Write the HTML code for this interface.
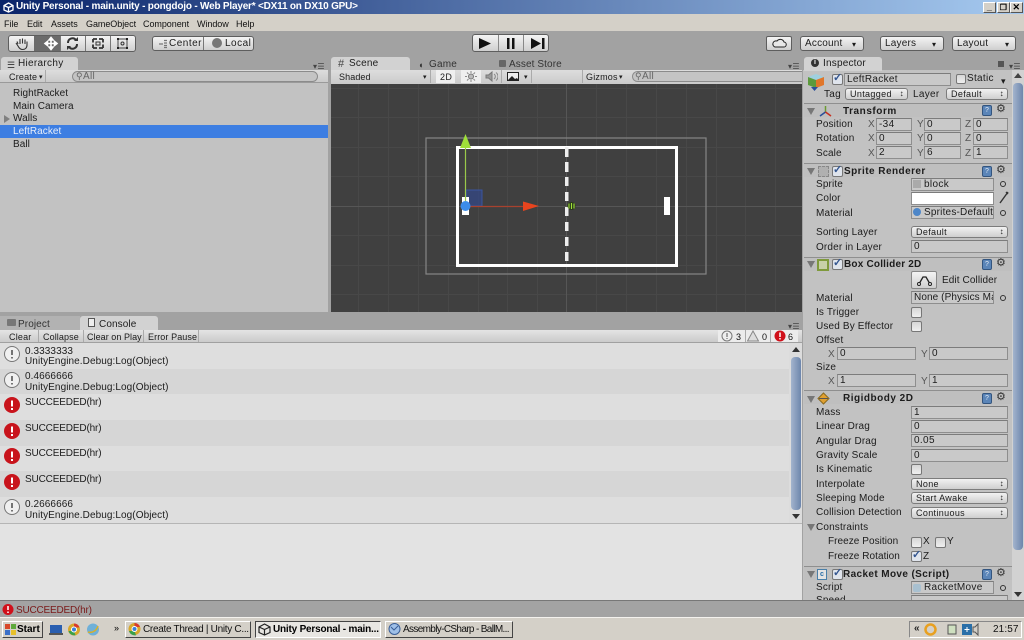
<!DOCTYPE html>
<html><head><meta charset="utf-8"><title>Unity Personal</title>
<style>
html,body{margin:0;padding:0;background:#a2a2a2}
#r{position:relative;width:1024px;height:640px;overflow:hidden;font:10px/12px "Liberation Sans",sans-serif;color:#1c1c1c;letter-spacing:.35px;filter:blur(.3px)}
#r div,#r svg{position:absolute}
.t{white-space:nowrap;transform:translateY(1px)}
.l{letter-spacing:.15px}
.b{font-weight:bold}
.m{letter-spacing:-.05px;color:#111;font-size:9px;top:17px}
.cl{letter-spacing:.08px}
.su{letter-spacing:-.15px}
.f{background:#c9c9c9;border:1px solid #8e8e8e;border-top-color:#7c7c7c;box-sizing:border-box;height:13px;padding-left:2px;line-height:11px;white-space:nowrap;overflow:hidden}
.d{background:linear-gradient(#f2f2f2,#cfcfcf);border:1px solid #7c7c7c;border-radius:3px;box-sizing:border-box;height:12px;padding-left:4px;line-height:10px;font-size:9px;white-space:nowrap}
.d:after{content:"\2195";position:absolute;right:3px;top:0;font-size:8px;font-weight:bold}
.c{background:linear-gradient(#d6d6d6,#efefef);border:1px solid #777;border-radius:2px;box-sizing:border-box;width:11px;height:11px}
.btn{background:linear-gradient(#f4f4f4,#cfcfcf);border:1px solid #5e5e5e;box-sizing:border-box}
.tab{background:#d2d2d2;border-radius:3px 3px 0 0}
.sep{background:#8f8f8f;height:1px;left:804px;width:208px}
.hd{background:#bfbfbf;left:804px;width:208px;height:13px}
.row{left:0;width:789px;height:26px}
.tri{width:0;height:0;border-left:4px solid transparent;border-right:4px solid transparent;border-top:7px solid #777}
.hp{background:#5b85b8;border-radius:2px;width:10px;height:11px;left:982px;border:1px solid #33557f;box-sizing:border-box;color:#dfe8f3;font-size:7px;line-height:9px;text-align:center;letter-spacing:0}
.g{font-size:11px;left:996px;line-height:11px;color:#333;letter-spacing:0}
</style></head><body><div id="r">

<!-- title bar -->
<div style="left:0;top:0;width:1024px;height:14px;background:linear-gradient(90deg,#0a246a,#a6caf0)"></div>
<svg style="left:3px;top:2px" width="11" height="11" viewBox="0 0 11 11"><path d="M5.5 1 10 3.5v4.500L5.500 10 1 8V3.500zM5.500 5.500V10M5.500 5.500 1 3.500M5.500 5.500 10 3.500" fill="none" stroke="#fff" stroke-width="1.300"/></svg>
<div class="t b" style="left:16px;top:0;color:#fff;font-size:10px;letter-spacing:-.2px">Unity Personal - main.unity - pongdojo - Web Player* &lt;DX11 on DX10 GPU&gt;</div>
<div style="left:983px;top:2px;width:13px;height:11px;background:#d4d0c8;border:1px solid;border-color:#fff #555 #555 #fff;box-sizing:border-box;font:bold 9px/9px 'Liberation Sans';color:#000;text-align:center">_</div>
<div style="left:997px;top:2px;width:13px;height:11px;background:#d4d0c8;border:1px solid;border-color:#fff #555 #555 #fff;box-sizing:border-box;font:bold 8px/9px 'Liberation Sans';color:#000;text-align:center">&#10064;</div>
<div style="left:1010px;top:2px;width:13px;height:11px;background:#d4d0c8;border:1px solid;border-color:#fff #555 #555 #fff;box-sizing:border-box;font:bold 9px/9px 'Liberation Sans';color:#000;text-align:center">&#10005;</div>

<!-- menu -->
<div style="left:0;top:14px;width:1024px;height:17px;background:#d4d0c8"></div>
<div class="t m" style="left:4px">File</div>
<div class="t m" style="left:27px">Edit</div>
<div class="t m" style="left:51px">Assets</div>
<div class="t m" style="left:86px">GameObject</div>
<div class="t m" style="left:143px">Component</div>
<div class="t m" style="left:197px">Window</div>
<div class="t m" style="left:236px">Help</div>

<!-- toolbar -->
<div style="left:0;top:31px;width:1024px;height:609px;background:#a2a2a2"></div>
<div class="btn" style="left:8px;top:35px;width:128px;height:17px;border-radius:3px"></div>
<div style="left:34px;top:36px;width:26px;height:15px;background:#6b6b6b"></div>
<div style="left:60px;top:36px;width:1px;height:15px;background:#777"></div>
<div style="left:85px;top:36px;width:1px;height:15px;background:#777"></div>
<div style="left:110px;top:36px;width:1px;height:15px;background:#777"></div>
<svg style="left:14px;top:36px" width="120" height="15" viewBox="0 0 120 15">
<path d="M4 8 3 5.500M6 8V3M8.500 7.500V2.500M11 8V3.500M13 9V5.500M13 9c0 3-2 4.500-4.500 4.500S5 12 4 10L2 7" fill="none" stroke="#333" stroke-width="1.100"/>
<path d="M31.500 7.500h11M37 2v11M35 4l2-2.500L39 4zM35 11l2 2.500L39 11zM33.500 5.500 31 7.500l2.500 2zM40.500 5.500l2.500 2-2.500 2z" fill="#fff" stroke="#fff" stroke-width="1.600"/>
<path d="M54 7a4.500 4.500 0 0 1 8-3M63 8a4.500 4.500 0 0 1-8 3" fill="none" stroke="#333" stroke-width="2"/><path d="M60 5h4V1zM57 10h-4v4z" fill="#333"/>
<path d="M79 3h4M79 3v3.500M89 3h-4M89 3v3.500M79 12h4M79 12v-3.500M89 12h-4M89 12v-3.500" fill="none" stroke="#333" stroke-width="1.800"/><rect x="82" y="6" width="4" height="3" fill="none" stroke="#333"/>
<rect x="104" y="3" width="9" height="9" fill="none" stroke="#444"/><path d="M103 2h2v2h-2zM112 2h2v2h-2zM103 11h2v2h-2zM112 11h2v2h-2z" fill="#222"/><circle cx="108.500" cy="7.500" r="1.500" fill="none" stroke="#333"/>
</svg>
<div class="btn" style="left:152px;top:36px;width:102px;height:15px;border-radius:3px"></div>
<div style="left:203px;top:37px;width:1px;height:13px;background:#777"></div>
<svg style="left:158px;top:39px" width="60" height="10" viewBox="0 0 60 10"><path d="M1 5h4M6 1.500h3M6 4h3M6 6.500h3M6 8.500h3" stroke="#777" stroke-width="1.200" fill="none"/></svg>
<div class="t" style="left:169px;top:37px;font-size:10px;letter-spacing:.5px">Center</div>
<div style="left:212px;top:38px;width:10px;height:10px;border-radius:50%;background:#777"></div>
<div class="t" style="left:225px;top:37px;font-size:10px;letter-spacing:.5px">Local</div>

<div class="btn" style="left:472px;top:34px;width:77px;height:18px;border-radius:3px"></div>
<div style="left:498px;top:35px;width:1px;height:16px;background:#888"></div>
<div style="left:523px;top:35px;width:1px;height:16px;background:#888"></div>
<svg style="left:472px;top:34px" width="77" height="18" viewBox="0 0 77 18"><path d="M7 4 19 9.500 7 15zM35 4h2.500v11H35zM40 4h2.500v11H40zM59 4l10 5.500L59 15zM70 4h2.500v11H70z" fill="#111"/></svg>

<div class="btn" style="left:766px;top:36px;width:26px;height:15px;border-radius:2px"></div>
<svg style="left:772px;top:38px" width="15" height="10" viewBox="0 0 15 10"><path d="M3 9H11.500a2.500 2.500 0 0 0 .5-5A4 4 0 0 0 5 3 3 3 0 0 0 3 9z" fill="#e8e8e8" stroke="#222"/></svg>
<div class="btn t" style="left:800px;top:36px;width:64px;height:15px;border-radius:3px;padding:0 0 0 4px;letter-spacing:.2px;transform:none;line-height:14px">Account</div>
<div class="t" style="left:852px;top:38px;font-size:8px">&#9662;</div>
<div class="btn t" style="left:880px;top:36px;width:64px;height:15px;border-radius:3px;padding:0 0 0 4px;letter-spacing:.2px;transform:none;line-height:14px">Layers</div>
<div class="t" style="left:932px;top:38px;font-size:8px">&#9662;</div>
<div class="btn t" style="left:952px;top:36px;width:64px;height:15px;border-radius:3px;padding:0 0 0 4px;letter-spacing:.2px;transform:none;line-height:14px">Layout</div>
<div class="t" style="left:1005px;top:38px;font-size:8px">&#9662;</div>

<!-- hierarchy -->
<div class="tab" style="left:1px;top:57px;width:77px;height:14px"></div>
<div class="t" style="left:7px;top:58px;font-size:9px;color:#333">&#9776;</div>
<div class="t" style="left:18px;top:57px;letter-spacing:.3px">Hierarchy</div>
<div class="t" style="left:313px;top:60px;font-size:8px;color:#444">&#9662;&#9776;</div>
<div style="left:0;top:70px;width:328px;height:13px;background:linear-gradient(#ddd,#cacaca);border-bottom:1px solid #9a9a9a;box-sizing:border-box"></div>
<div class="t" style="left:9px;top:70px;font-size:9px;letter-spacing:.2px">Create</div>
<div class="t" style="left:39px;top:71px;font-size:7px">&#9662;</div>
<div style="left:45px;top:70px;width:1px;height:12px;background:#aaa"></div>
<div style="left:72px;top:71px;width:246px;height:11px;border:1px solid #8b8b8b;border-radius:6px;background:#c4c4c4;box-sizing:border-box"></div>
<div class="t" style="left:76px;top:69px;font-size:9px;color:#666">&#9906;<span style="font-size:10px">All</span></div>
<div style="left:0;top:83px;width:328px;height:229px;background:#c2c2c2"></div>
<div style="left:0;top:125px;width:328px;height:13px;background:#3d7ee2"></div>
<div class="t" style="left:13px;top:87px;letter-spacing:.05px">RightRacket</div>
<div class="t" style="left:13px;top:100px;letter-spacing:.05px">Main Camera</div>
<div class="t" style="left:13px;top:112px;letter-spacing:.05px">Walls</div>
<div style="left:4px;top:115px;width:0;height:0;border-top:4px solid transparent;border-bottom:4px solid transparent;border-left:6px solid #808080"></div>
<div class="t" style="left:13px;top:125px;letter-spacing:.05px;color:#e8eefa">LeftRacket</div>
<div class="t" style="left:13px;top:138px;letter-spacing:.05px">Ball</div>

<!-- scene -->
<div class="tab" style="left:331px;top:57px;width:79px;height:14px"></div>
<div class="t" style="left:338px;top:57px;font-size:11px;color:#444;letter-spacing:0">#</div>
<div class="t" style="left:349px;top:57px;letter-spacing:.2px">Scene</div>
<div class="t" style="left:418px;top:58px;font-size:9px;color:#333">&#9686;</div>
<div class="t" style="left:429px;top:58px;letter-spacing:.2px;color:#333">Game</div>
<div style="left:499px;top:60px;width:7px;height:7px;background:#666;border-radius:1px"></div>
<div class="t" style="left:509px;top:58px;letter-spacing:.1px;color:#333">Asset Store</div>
<div class="t" style="left:788px;top:60px;font-size:8px;color:#444">&#9662;&#9776;</div>
<div style="left:331px;top:70px;width:471px;height:14px;background:linear-gradient(#ddd,#cacaca)"></div>
<div class="t" style="left:339px;top:70px;font-size:9px;letter-spacing:.1px">Shaded</div>
<div class="t" style="left:423px;top:71px;font-size:7px">&#9662;</div>
<div style="left:430px;top:70px;width:1px;height:13px;background:#aaa"></div>
<div style="left:436px;top:70px;width:19px;height:13px;background:#efefef"></div>
<div class="t" style="left:440px;top:70px;font-size:9px">2D</div>
<div style="left:461px;top:70px;width:20px;height:13px;background:#efefef"></div>
<svg style="left:465px;top:71px" width="12" height="11" viewBox="0 0 12 11"><circle cx="6" cy="5.500" r="2.500" fill="#bbb" stroke="#777"/><path d="M6 0v2M6 9v2M0 5.500h2M10 5.500h2M2 1.500l1.500 1.500M8.500 8l1.500 1.500M2 9.500 3.500 8M8.500 3 10 1.500" stroke="#888"/></svg>
<svg style="left:485px;top:71px" width="13" height="11" viewBox="0 0 13 11"><path d="M1 4h2.500L7 1v9L3.500 7H1z" fill="#999" stroke="#777"/><path d="M9 3a3 3 0 0 1 0 5M11 1.500a5 5 0 0 1 0 8" fill="none" stroke="#888"/></svg>
<div style="left:501px;top:70px;width:1px;height:13px;background:#aaa"></div>
<svg style="left:507px;top:72px" width="13" height="9" viewBox="0 0 13 9"><rect x=".5" y=".5" width="11" height="8" fill="#eee" stroke="#222"/><path d="M1 8 5 4l3 3 2-1 1.500 2z" fill="#222"/></svg>
<div class="t" style="left:524px;top:71px;font-size:7px">&#9662;</div>
<div style="left:531px;top:70px;width:1px;height:13px;background:#aaa"></div>
<div style="left:582px;top:70px;width:1px;height:13px;background:#aaa"></div>
<div class="t" style="left:586px;top:70px;font-size:9px;letter-spacing:.2px">Gizmos</div>
<div class="t" style="left:619px;top:71px;font-size:7px">&#9662;</div>
<div style="left:632px;top:71px;width:170px;height:11px;border:1px solid #8b8b8b;border-right:0;border-radius:6px 0 0 6px;background:#c4c4c4;box-sizing:border-box"></div>
<div class="t" style="left:635px;top:69px;font-size:9px;color:#666">&#9906;<span style="font-size:10px">All</span></div>
<svg style="left:331px;top:84px" width="471" height="228" viewBox="331 84 471 228">
<rect x="331" y="84" width="471" height="228" fill="#404040"/>
<g stroke="#484848"><path d="M358.500 84v228M388.500 84v228M418.500 84v228M448.500 84v228M478.500 84v228M507.500 84v228M537.500 84v228M596.500 84v228M626.500 84v228M656.500 84v228M686.500 84v228M716.500 84v228M745.500 84v228M775.500 84v228M331 88.500h471M331 117.500h471M331 147.500h471M331 176.500h471M331 235.500h471M331 265.500h471M331 294.500h471"/></g>
<path d="M566.500 84v228M331 206.500h471" stroke="#565656"/>
<rect x="426" y="138" width="280" height="136" fill="none" stroke="#858585" stroke-width="1.200"/>
<rect x="457.500" y="147.500" width="219" height="118" fill="none" stroke="#fff" stroke-width="3"/>
<g fill="#eee"><rect x="565" y="147" width="3.500" height="10"/><rect x="565" y="162" width="3.500" height="10"/><rect x="565" y="177" width="3.500" height="9"/><rect x="565" y="192" width="3.500" height="9"/><rect x="565" y="207" width="3.500" height="9"/><rect x="565" y="222" width="3.500" height="9"/><rect x="565" y="237" width="3.500" height="9"/><rect x="565" y="252" width="3.500" height="9"/></g>
<rect x="664" y="197" width="6" height="18" fill="#fff"/>
<rect x="466" y="190" width="16" height="16" fill="#32478a" fill-opacity=".7" stroke="#3a55a0"/>
<rect x="462" y="197" width="7" height="18" fill="#fff"/>
<path d="M465.500 146v55" stroke="#9ac94a" stroke-width="1.200"/>
<path d="M465.500 134 471 148H460z" fill="#9fe03a"/>
<path d="M470 206.500h55" stroke="#a8422e" stroke-width="1.200"/>
<path d="M523 201.500 539 206 523 211z" fill="#e8441e"/>
<circle cx="465.500" cy="206" r="5" fill="#3c8ce8"/>
<circle cx="571.500" cy="206" r="4" fill="#2a3a1a"/><path d="M569 203.500v5M571.500 203v6M574 203.500v5" stroke="#9fe03a" stroke-width="1.100"/>
</svg>

<!-- console -->
<div style="left:0;top:316px;width:80px;height:14px;background:#b2b2b2"></div>
<div style="left:7px;top:319px;width:9px;height:7px;background:#777;border-radius:1px"></div>
<div class="t" style="left:18px;top:318px;letter-spacing:.1px;color:#333">Project</div>
<div class="tab" style="left:80px;top:316px;width:78px;height:15px"></div>
<div style="left:88px;top:318px;width:7px;height:9px;border:1px solid #555;box-sizing:border-box;background:#eee"></div>
<div class="t" style="left:99px;top:318px;letter-spacing:.1px">Console</div>
<div class="t" style="left:788px;top:320px;font-size:8px;color:#444">&#9662;&#9776;</div>
<div style="left:0;top:330px;width:802px;height:13px;background:linear-gradient(#e4e4e4,#cbcbcb);border-bottom:1px solid #a0a0a0;box-sizing:border-box"></div>
<div style="left:38px;top:330px;width:1px;height:12px;background:#aaa"></div>
<div style="left:83px;top:330px;width:1px;height:12px;background:#aaa"></div>
<div style="left:143px;top:330px;width:1px;height:12px;background:#aaa"></div>
<div style="left:198px;top:330px;width:1px;height:12px;background:#aaa"></div>
<div class="t" style="left:9px;top:330px;font-size:9px;letter-spacing:.2px">Clear</div>
<div class="t" style="left:43px;top:330px;font-size:9px;letter-spacing:.1px">Collapse</div>
<div class="t" style="left:87px;top:330px;font-size:9px;letter-spacing:.05px">Clear on Play</div>
<div class="t" style="left:148px;top:330px;font-size:9px;letter-spacing:.1px">Error Pause</div>
<div style="left:718px;top:330px;width:80px;height:12px;background:#ececec"></div>
<div style="left:745px;top:330px;width:1px;height:12px;background:#aaa"></div>
<div style="left:770px;top:330px;width:1px;height:12px;background:#aaa"></div>
<svg style="left:720px;top:330px" width="72" height="12" viewBox="0 0 72 12"><circle cx="7" cy="6" r="5" fill="#eee" stroke="#777"/><path d="M7 3v4M7 8v1" stroke="#555"/><path d="M33 1l5.500 10h-11z" fill="#ddd" stroke="#888"/><circle cx="60" cy="6" r="5.500" fill="#d0101a"/><path d="M60 2.500v4.500M60 8v1.500" stroke="#fff" stroke-width="1.500"/></svg>
<div class="t" style="left:736px;top:330px;font-size:9px;color:#111">3</div>
<div class="t" style="left:762px;top:330px;font-size:9px;color:#111">0</div>
<div class="t" style="left:788px;top:330px;font-size:9px;color:#111">6</div>

<div style="left:0;top:343px;width:802px;height:257px;background:#e3e3e3"></div>
<div class="row" style="top:343px;background:#dedede"></div>
<div class="row" style="top:369px;background:#d6d6d6"></div>
<div class="row" style="top:394px;background:#dedede"></div>
<div class="row" style="top:420px;background:#d6d6d6"></div>
<div class="row" style="top:446px;background:#dedede"></div>
<div class="row" style="top:471px;background:#d6d6d6"></div>
<div class="row" style="top:497px;background:#dedede;height:27px"></div>
<div style="left:0;top:523px;width:802px;height:1px;background:#b5b5b5"></div>
<svg style="left:0;top:343px" width="24" height="180" viewBox="0 0 24 180">
<g fill="#f0f0f0" stroke="#777"><circle cx="12" cy="11" r="7.500"/><circle cx="12" cy="37" r="7.500"/></g>
<path d="M12 7v5M12 14v1.500M12 33v5M12 40v1.500" stroke="#555" stroke-width="1.600"/>
<g fill="#c8141c"><circle cx="12" cy="62" r="8"/><circle cx="12" cy="88" r="8"/><circle cx="12" cy="113" r="8"/><circle cx="12" cy="139" r="8"/></g>
<path d="M12 57.500v6M12 65v2M12 83.500v6M12 91v2M12 108.500v6M12 116v2M12 134.500v6M12 142v2" stroke="#fff" stroke-width="2"/>
<circle cx="12" cy="164" r="7.500" fill="#f0f0f0" stroke="#777"/><path d="M12 160v5M12 167v1.500" stroke="#555" stroke-width="1.600"/>
</svg>
<div class="t cl" style="left:25px;top:345px">0.3333333</div>
<div class="t cl" style="left:25px;top:355px">UnityEngine.Debug:Log(Object)</div>
<div class="t cl" style="left:25px;top:370px">0.4666666</div>
<div class="t cl" style="left:25px;top:381px">UnityEngine.Debug:Log(Object)</div>
<div class="t su" style="left:25px;top:396px">SUCCEEDED(hr)</div>
<div class="t su" style="left:25px;top:422px">SUCCEEDED(hr)</div>
<div class="t su" style="left:25px;top:447px">SUCCEEDED(hr)</div>
<div class="t su" style="left:25px;top:473px">SUCCEEDED(hr)</div>
<div class="t cl" style="left:25px;top:498px">0.2666666</div>
<div class="t cl" style="left:25px;top:509px">UnityEngine.Debug:Log(Object)</div>
<div style="left:789px;top:343px;width:13px;height:180px;background:#dcdcdc"></div>
<div style="left:791px;top:357px;width:10px;height:153px;background:linear-gradient(90deg,#a3b4cd,#6d86ac);border-radius:4px"></div>
<div style="left:792px;top:347px;width:0;height:0;border-left:4px solid transparent;border-right:4px solid transparent;border-bottom:5px solid #333"></div>
<div style="left:792px;top:514px;width:0;height:0;border-left:4px solid transparent;border-right:4px solid transparent;border-top:5px solid #333"></div>

<!-- inspector -->
<div style="left:803px;top:70px;width:221px;height:530px;background:#c2c2c2"></div>
<div class="tab" style="left:804px;top:57px;width:78px;height:14px"></div>
<div style="left:811px;top:59px;width:8px;height:8px;border-radius:50%;background:#333;color:#fff;font:bold 7px/8px 'Liberation Sans';text-align:center;letter-spacing:0">i</div>
<div class="t" style="left:823px;top:57px;letter-spacing:.2px">Inspector</div>
<div style="left:998px;top:61px;width:6px;height:6px;background:#555"></div>
<div class="t" style="left:1009px;top:60px;font-size:8px;color:#444">&#9662;&#9776;</div>

<!-- scrollbar -->
<div style="left:1012px;top:70px;width:12px;height:530px;background:#d2d2d2"></div>
<div style="left:1013px;top:83px;width:10px;height:467px;background:linear-gradient(90deg,#a3b4cd,#6d86ac);border-radius:4px"></div>
<div style="left:1014px;top:73px;width:0;height:0;border-left:4px solid transparent;border-right:4px solid transparent;border-bottom:5px solid #444"></div>
<div style="left:1014px;top:592px;width:0;height:0;border-left:4px solid transparent;border-right:4px solid transparent;border-top:5px solid #333"></div>

<svg style="left:807px;top:73px" width="18" height="19" viewBox="0 0 18 19"><path d="M1 4 9 1l8 3-8 3z" fill="#9fd0e0"/><path d="M1 4l8 3v8l-8-3z" fill="#5c9a3c"/><path d="M17 4 9 7v8l8-3z" fill="#e0762a"/><path d="M4 14h7l-3.500 4z" fill="#2a4f9a"/></svg>
<div class="c" style="left:832px;top:74px;background:#dfe4ec"></div>
<div class="t b" style="left:833px;top:71px;color:#33558f;font-size:11px;letter-spacing:0">&#10003;</div>
<div class="f" style="left:844px;top:73px;width:107px;letter-spacing:.3px">LeftRacket</div>
<div class="c" style="left:956px;top:74px;width:10px;height:10px"></div>
<div class="t" style="left:967px;top:72px;letter-spacing:.3px">Static</div>
<div class="t" style="left:1001px;top:74px;font-size:9px">&#9662;</div>
<div class="t" style="left:824px;top:88px;letter-spacing:.3px">Tag</div>
<div class="d" style="left:845px;top:88px;width:63px">Untagged</div>
<div class="t" style="left:913px;top:88px;letter-spacing:.3px">Layer</div>
<div class="d" style="left:946px;top:88px;width:62px">Default</div>

<div class="sep" style="top:103px"></div>
<div class="hd" style="top:104px"></div>
<div class="tri" style="left:807px;top:108px"></div>
<svg style="left:819px;top:105px" width="13" height="12" viewBox="0 0 13 12"><path d="M6.500 7V1" stroke="#6a9a30" stroke-width="1.500"/><path d="M6.500 7 1 11" stroke="#2a4f9a" stroke-width="1.500"/><path d="M6.500 7 12 11" stroke="#c83020" stroke-width="1.500"/></svg>
<div class="t b" style="left:843px;top:105px;letter-spacing:.55px">Transform</div>
<div class="hp" style="top:105px">?</div><div class="g" style="top:104px">&#9881;</div>

<div class="t l" style="left:816px;top:118px">Position</div>
<div class="t l" style="left:816px;top:132px">Rotation</div>
<div class="t l" style="left:816px;top:147px">Scale</div>
<div class="t" style="left:868px;top:118px;color:#555">X</div><div class="t" style="left:917px;top:118px;color:#555">Y</div><div class="t" style="left:965px;top:118px;color:#555">Z</div>
<div class="t" style="left:868px;top:132px;color:#555">X</div><div class="t" style="left:917px;top:132px;color:#555">Y</div><div class="t" style="left:965px;top:132px;color:#555">Z</div>
<div class="t" style="left:868px;top:147px;color:#555">X</div><div class="t" style="left:917px;top:147px;color:#555">Y</div><div class="t" style="left:965px;top:147px;color:#555">Z</div>
<div class="f" style="left:876px;top:118px;width:36px">-34</div><div class="f" style="left:924px;top:118px;width:37px">0</div><div class="f" style="left:973px;top:118px;width:35px">0</div>
<div class="f" style="left:876px;top:132px;width:36px">0</div><div class="f" style="left:924px;top:132px;width:37px">0</div><div class="f" style="left:973px;top:132px;width:35px">0</div>
<div class="f" style="left:876px;top:146px;width:36px">2</div><div class="f" style="left:924px;top:146px;width:37px">6</div><div class="f" style="left:973px;top:146px;width:35px">1</div>

<div class="sep" style="top:163px"></div>
<div class="hd" style="top:164px"></div>
<div class="tri" style="left:807px;top:168px"></div>
<div style="left:818px;top:166px;width:11px;height:11px;background:#b0b0b0;border:1px dashed #888;box-sizing:border-box"></div>
<div class="c" style="left:832px;top:166px;background:#dfe4ec"></div>
<div class="t b" style="left:833px;top:163px;color:#33558f;font-size:11px;letter-spacing:0">&#10003;</div>
<div class="t b" style="left:844px;top:165px;letter-spacing:.45px">Sprite Renderer</div>
<div class="hp" style="top:166px">?</div><div class="g" style="top:165px">&#9881;</div>

<div class="t l" style="left:816px;top:178px">Sprite</div>
<div class="t l" style="left:816px;top:192px">Color</div>
<div class="t l" style="left:816px;top:207px">Material</div>
<div class="f" style="left:911px;top:178px;width:83px;padding-left:12px">block</div>
<div style="left:913px;top:180px;width:8px;height:8px;background:#aaa"></div>
<div class="f" style="left:911px;top:192px;width:83px;background:#fff"></div>
<div class="f" style="left:911px;top:206px;width:83px;padding-left:12px;letter-spacing:.2px">Sprites-Default</div>
<div style="left:913px;top:208px;width:8px;height:8px;border-radius:50%;background:#4d86c8"></div>
<svg style="left:999px;top:178px" width="10" height="46" viewBox="0 0 10 46"><circle cx="4" cy="6" r="2.500" fill="none" stroke="#333"/><circle cx="4" cy="35" r="2.500" fill="none" stroke="#333"/><path d="M9 14 1 25M7 14l2 2" stroke="#333" stroke-width="1.400"/></svg>

<div class="t l" style="left:816px;top:226px">Sorting Layer</div>
<div class="t l" style="left:816px;top:241px">Order in Layer</div>
<div class="d" style="left:911px;top:226px;width:97px">Default</div>
<div class="f" style="left:911px;top:240px;width:97px">0</div>

<div class="sep" style="top:257px"></div>
<div class="hd" style="top:258px"></div>
<div class="tri" style="left:807px;top:261px"></div>
<div style="left:817px;top:259px;width:12px;height:12px;background:#c8d0a8;border:2px solid #7f9a3c;box-sizing:border-box"></div>
<div class="c" style="left:832px;top:259px;background:#dfe4ec"></div>
<div class="t b" style="left:833px;top:256px;color:#33558f;font-size:11px;letter-spacing:0">&#10003;</div>
<div class="t b" style="left:844px;top:258px;letter-spacing:.2px">Box Collider 2D</div>
<div class="hp" style="top:259px">?</div><div class="g" style="top:258px">&#9881;</div>

<div class="btn" style="left:911px;top:271px;width:26px;height:18px;border-radius:2px;border-color:#888"></div>
<svg style="left:917px;top:274px" width="15" height="13" viewBox="0 0 15 13"><path d="M2 10 6 3h3l4 7" fill="none" stroke="#222" stroke-width="1.300"/><circle cx="2" cy="10" r="1.500" fill="#eee" stroke="#222"/><circle cx="13" cy="10" r="1.500" fill="#eee" stroke="#222"/></svg>
<div class="t" style="left:942px;top:274px;letter-spacing:.1px">Edit Collider</div>

<div class="t l" style="left:816px;top:292px">Material</div>
<div class="f" style="left:911px;top:291px;width:83px;letter-spacing:.1px">None (Physics Ma</div>
<svg style="left:999px;top:293px" width="10" height="10" viewBox="0 0 10 10"><circle cx="4" cy="5" r="2.500" fill="none" stroke="#333"/></svg>
<div class="t l" style="left:816px;top:306px">Is Trigger</div>
<div class="c" style="left:911px;top:307px"></div>
<div class="t l" style="left:816px;top:320px">Used By Effector</div>
<div class="c" style="left:911px;top:321px"></div>
<div class="t l" style="left:816px;top:334px">Offset</div>
<div class="t" style="left:828px;top:348px;color:#555">X</div><div class="f" style="left:837px;top:347px;width:79px">0</div>
<div class="t" style="left:921px;top:348px;color:#555">Y</div><div class="f" style="left:929px;top:347px;width:79px">0</div>
<div class="t l" style="left:816px;top:361px">Size</div>
<div class="t" style="left:828px;top:375px;color:#555">X</div><div class="f" style="left:837px;top:374px;width:79px">1</div>
<div class="t" style="left:921px;top:375px;color:#555">Y</div><div class="f" style="left:929px;top:374px;width:79px">1</div>

<div class="sep" style="top:390px"></div>
<div class="hd" style="top:391px"></div>
<div class="tri" style="left:807px;top:396px"></div>
<svg style="left:817px;top:392px" width="13" height="13" viewBox="0 0 13 13"><path d="M6.500 1 12 6.500 6.500 12 1 6.500z" fill="#e0a030" stroke="#8a6a20"/><path d="M2 6.500h9" stroke="#555"/></svg>
<div class="t b" style="left:843px;top:392px;letter-spacing:.5px">Rigidbody 2D</div>
<div class="hp" style="top:393px">?</div><div class="g" style="top:392px">&#9881;</div>

<div class="t l" style="left:816px;top:406px">Mass</div><div class="f" style="left:911px;top:406px;width:97px">1</div>
<div class="t l" style="left:816px;top:420px">Linear Drag</div><div class="f" style="left:911px;top:420px;width:97px">0</div>
<div class="t l" style="left:816px;top:435px">Angular Drag</div><div class="f" style="left:911px;top:434px;width:97px">0.05</div>
<div class="t l" style="left:816px;top:449px">Gravity Scale</div><div class="f" style="left:911px;top:449px;width:97px">0</div>
<div class="t l" style="left:816px;top:463px">Is Kinematic</div><div class="c" style="left:911px;top:464px"></div>
<div class="t l" style="left:816px;top:478px">Interpolate</div><div class="d" style="left:911px;top:478px;width:97px">None</div>
<div class="t l" style="left:816px;top:492px">Sleeping Mode</div><div class="d" style="left:911px;top:492px;width:97px">Start Awake</div>
<div class="t l" style="left:816px;top:506px">Collision Detection</div><div class="d" style="left:911px;top:507px;width:97px">Continuous</div>
<div class="tri" style="left:807px;top:524px"></div>
<div class="t l" style="left:816px;top:521px">Constraints</div>
<div class="t" style="left:828px;top:535px;letter-spacing:.05px">Freeze Position</div>
<div class="c" style="left:911px;top:537px"></div><div class="t" style="left:923px;top:535px">X</div>
<div class="c" style="left:935px;top:537px"></div><div class="t" style="left:947px;top:535px">Y</div>
<div class="t" style="left:828px;top:550px;letter-spacing:.05px">Freeze Rotation</div>
<div class="c" style="left:911px;top:551px;background:#dfe4ec"></div>
<div class="t b" style="left:912px;top:548px;color:#33558f;font-size:11px;letter-spacing:0">&#10003;</div>
<div class="t" style="left:923px;top:550px">Z</div>

<div class="sep" style="top:566px"></div>
<div class="hd" style="top:567px"></div>
<div class="tri" style="left:807px;top:571px"></div>
<div style="left:817px;top:569px;width:10px;height:11px;background:#e4e4e4;border:1px solid #4a7fa8;box-sizing:border-box;color:#2a6fa8;font:bold 7px/9px 'Liberation Sans';text-align:center;letter-spacing:0">c</div>
<div class="c" style="left:832px;top:569px;background:#dfe4ec"></div>
<div class="t b" style="left:833px;top:566px;color:#33558f;font-size:11px;letter-spacing:0">&#10003;</div>
<div class="t b" style="left:843px;top:568px;letter-spacing:.38px">Racket Move (Script)</div>
<div class="hp" style="top:569px">?</div><div class="g" style="top:568px">&#9881;</div>
<div class="t l" style="left:816px;top:581px">Script</div>
<div class="f" style="left:911px;top:581px;width:83px;padding-left:12px;letter-spacing:.3px">RacketMove</div>
<div style="left:913px;top:584px;width:8px;height:8px;background:#a8c0d0;border-radius:2px"></div>
<svg style="left:999px;top:583px" width="10" height="10" viewBox="0 0 10 10"><circle cx="4" cy="5" r="2.500" fill="none" stroke="#333"/></svg>
<div class="f" style="left:911px;top:595px;width:97px;height:5px;border-bottom:0"></div>
<div class="t l" style="left:816px;top:595px;height:5px;overflow:hidden;transform:none">Speed</div>

<!-- status bar -->
<div style="left:0;top:600px;width:1024px;height:17px;background:#a3a3a3;border-top:1px solid #777;box-sizing:border-box"></div>
<svg style="left:2px;top:603px" width="13" height="13" viewBox="0 0 13 13"><circle cx="6" cy="6.500" r="5.500" fill="#d0101a"/><path d="M6 3v4M6 8.500v1.500" stroke="#fff" stroke-width="1.500"/></svg>
<div class="t" style="left:16px;top:604px;color:#7a1a1a;letter-spacing:-.2px">SUCCEEDED(hr)</div>

<!-- taskbar -->
<div style="left:0;top:617px;width:1024px;height:23px;background:#d4d0c8;border-top:1px solid #f4f2ee;box-sizing:border-box"></div>
<div style="left:2px;top:621px;width:41px;height:17px;background:#d4d0c8;border:1px solid;border-color:#fff #444 #444 #fff;box-sizing:border-box"></div>
<svg style="left:4px;top:622px" width="13" height="14" viewBox="0 0 13 14"><path d="M1 2h5v5H1z" fill="#d8482a"/><path d="M7 2h5v5H7z" fill="#5ea83a"/><path d="M1 8h5v5H1z" fill="#3a6fc8"/><path d="M7 8h5v5H7z" fill="#e8c02a"/></svg>
<div class="t b" style="left:17px;top:623px;color:#000;letter-spacing:0;font-size:10px">Start</div>
<svg style="left:49px;top:622px" width="60" height="15" viewBox="0 0 60 15"><rect x="1" y="3" width="12" height="8" fill="#2a5fb0"/><rect x="0" y="11" width="14" height="2" fill="#555"/><circle cx="25" cy="7.500" r="6" fill="#d8a82a"/><path d="M25 1.500a6 6 0 0 1 5.500 4H25z" fill="#d83a2a"/><path d="M19.500 9a6 6 0 0 0 7 4.300L25 9z" fill="#3aa04a"/><circle cx="25" cy="7.500" r="2.500" fill="#3a7fd8" stroke="#fff"/><circle cx="44" cy="7.500" r="6" fill="#6fb0d8"/><path d="M39 10c3 1 8 0 10-6" fill="none" stroke="#d8b02a" stroke-width="1.500"/></svg>
<div class="t" style="left:114px;top:621px;color:#000;font-size:9px;letter-spacing:0">&raquo;</div>

<div style="left:125px;top:621px;width:126px;height:17px;background:#d4d0c8;border:1px solid;border-color:#fff #444 #444 #fff;box-sizing:border-box"></div>
<svg style="left:128px;top:622px" width="13" height="14" viewBox="0 0 13 14"><circle cx="6.500" cy="7" r="6" fill="#d8a82a"/><path d="M6.500 1a6 6 0 0 1 5.500 4H6.500z" fill="#d83a2a"/><path d="M1 9a6 6 0 0 0 7 4.300L6.500 9z" fill="#3aa04a"/><circle cx="6.500" cy="7" r="2.500" fill="#3a7fd8" stroke="#fff"/></svg>
<div class="t" style="left:143px;top:623px;color:#111;letter-spacing:-.3px">Create Thread | Unity C...</div>
<div style="left:255px;top:621px;width:126px;height:17px;background:#e8e6e2;border:1px solid;border-color:#444 #fff #fff #444;box-sizing:border-box"></div>
<svg style="left:258px;top:623px" width="13" height="13" viewBox="0 0 13 13"><path d="M6.500 1 12 4v5.500L6.500 12 1 9.500V4zM6.500 6.500 12 4M6.500 6.500 1 4M6.500 6.500V12" fill="none" stroke="#222" stroke-width="1.200"/></svg>
<div class="t b" style="left:273px;top:623px;color:#000;letter-spacing:-.2px">Unity Personal - main...</div>
<div style="left:385px;top:621px;width:128px;height:17px;background:#d4d0c8;border:1px solid;border-color:#fff #444 #444 #fff;box-sizing:border-box"></div>
<svg style="left:388px;top:622px" width="13" height="14" viewBox="0 0 13 14"><circle cx="6.500" cy="7" r="5.500" fill="#9fc0e8" stroke="#3a5f98"/><path d="M3 5l3 3 4-4" stroke="#3a5f98" fill="none"/></svg>
<div class="t" style="left:403px;top:623px;color:#111;letter-spacing:-.65px">Assembly-CSharp - BallM...</div>

<div style="left:909px;top:621px;width:113px;height:17px;border:1px solid;border-color:#888 #fff #fff #888;box-sizing:border-box"></div>
<div class="t b" style="left:914px;top:622px;color:#222;letter-spacing:0">&laquo;</div>
<svg style="left:923px;top:622px" width="60" height="15" viewBox="0 0 60 15"><circle cx="7.500" cy="7.500" r="5" fill="none" stroke="#e8a020" stroke-width="2.500"/><rect x="25" y="3" width="8" height="9" fill="#cfe0c0" stroke="#555"/><rect x="39" y="2" width="10" height="11" fill="#2a6fa8"/><path d="M44 5v5M41.500 7.500h5" stroke="#fff"/><path d="M50 5h2l3-3v11l-3-3h-2z" fill="none" stroke="#555"/></svg>
<div class="t" style="left:993px;top:623px;color:#111;letter-spacing:.1px">21:57</div>

</div></body></html>
